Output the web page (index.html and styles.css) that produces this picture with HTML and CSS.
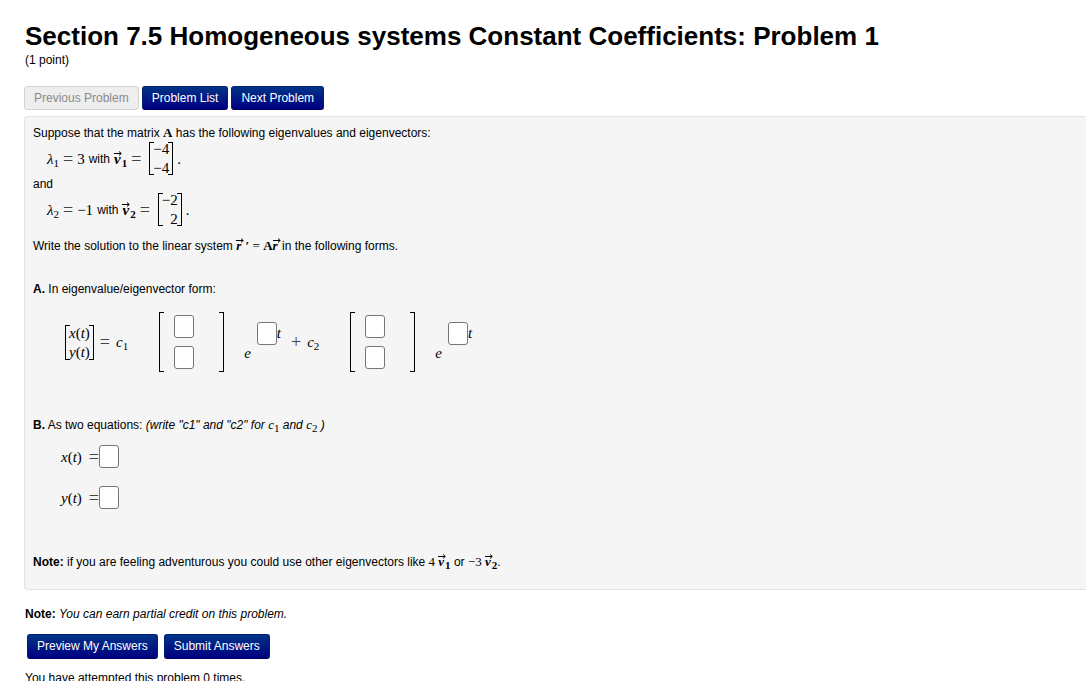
FILE: index.html
```
<!DOCTYPE html>
<html lang="en">
<head>
    <meta charset="UTF-8">
    <meta name="viewport" content="width=device-width, initial-scale=1.0">
    <title>Section 7.5 Homogeneous systems Constant Coefficients: Problem 1</title>
    <link rel="stylesheet" href="styles.css">
</head>
<body>

    <!-- Arrow drawn above vector names -->
    <svg class="defs" width="0" height="0" aria-hidden="true">
        <symbol id="arrow" viewBox="0 0 8 5">
            <path d="M0 2.5H7M5 0.5L7.3 2.5L5 4.5" fill="none" stroke="#000" stroke-width="1"/>
        </symbol>
    </svg>

    <header class="header">
        <h1 class="title">Section 7.5 Homogeneous systems Constant Coefficients: Problem 1</h1>
        <div>(1 point)</div>
    </header>

    <!-- Problem navigation -->
    <nav class="nav">
        <button class="btn btn-disabled" type="button" disabled>Previous Problem</button>
        <button class="btn" type="button">Problem List</button>
        <button class="btn" type="button">Next Problem</button>
    </nav>

    <form>
        <div class="problem">
            <p>Suppose that the matrix <b class="math">A</b> has the following eigenvalues and eigenvectors:</p>

            <div class="eigen">
                <span class="math"><i>λ</i><sub>1</sub></span>
                <span class="math op">=</span>
                <span class="math">3</span>
                <span>with</span>
                <span class="math bold"><span class="vec">v<svg><use href="#arrow"/></svg></span><sub>1</sub></span>
                <span class="math op">=</span>
                <span class="matrix math"><span>−4</span><span>−4</span></span>
                <span class="math">.</span>
            </div>
            <p>and</p>
            <div class="eigen">
                <span class="math"><i>λ</i><sub>2</sub></span>
                <span class="math op">=</span>
                <span class="math">−1</span>
                <span>with</span>
                <span class="math bold"><span class="vec">v<svg><use href="#arrow"/></svg></span><sub>2</sub></span>
                <span class="math op">=</span>
                <span class="matrix math"><span>−2</span><span>2</span></span>
                <span class="math">.</span>
            </div>

            <p class="task">Write the solution to the linear system <span class="math bold"><span class="vec">r<svg><use href="#arrow"/></svg></span> ′</span> <span class="math">=</span> <span class="math bold">A<span class="vec">r<svg><use href="#arrow"/></svg></span></span> in the following forms.</p>

            <!-- Part A -->
            <p class="part-a"><b>A.</b> In eigenvalue/eigenvector form:</p>
            <div class="system">
                <span class="matrix math"><span><i>x</i>(<i>t</i>)</span><span><i>y</i>(<i>t</i>)</span></span>
                <span class="math op">=</span>
                <span class="math"><i>c</i><sub>1</sub></span>
                <div class="answer-vector">
                    <input class="answer" type="text" aria-label="First vector, row 1">
                    <input class="answer" type="text" aria-label="First vector, row 2">
                </div>
                <div class="power math">
                    <i class="base">e</i>
                    <input class="answer" type="text" aria-label="First exponent">
                    <i class="exponent">t</i>
                </div>
                <span class="math op">+</span>
                <span class="math"><i>c</i><sub>2</sub></span>
                <div class="answer-vector">
                    <input class="answer" type="text" aria-label="Second vector, row 1">
                    <input class="answer" type="text" aria-label="Second vector, row 2">
                </div>
                <div class="power math">
                    <i class="base">e</i>
                    <input class="answer" type="text" aria-label="Second exponent">
                    <i class="exponent">t</i>
                </div>
            </div>

            <!-- Part B -->
            <p><b>B.</b> As two equations: <i>(write "c1" and "c2" for <span class="math">c<sub class="upright">1</sub></span> and <span class="math">c<sub class="upright">2</sub></span> )</i></p>
            <div class="equation">
                <label class="math" for="xt"><i>x</i>(<i>t</i>)</label>
                <span class="math op">=</span>
                <input class="answer" id="xt" type="text">
            </div>
            <div class="equation">
                <label class="math" for="yt"><i>y</i>(<i>t</i>)</label>
                <span class="math op">=</span>
                <input class="answer" id="yt" type="text">
            </div>

            <p class="hint"><b>Note:</b> if you are feeling adventurous you could use other eigenvectors like <span class="math">4 <span class="bold"><span class="vec">v<svg><use href="#arrow"/></svg></span><sub>1</sub></span></span> or <span class="math">−3 <span class="bold"><span class="vec">v<svg><use href="#arrow"/></svg></span><sub>2</sub></span></span>.</p>
        </div>

        <p class="credit"><b>Note:</b> <i>You can earn partial credit on this problem.</i></p>

        <div class="submit">
            <button class="btn" type="button">Preview My Answers</button>
            <button class="btn" type="submit">Submit Answers</button>
        </div>
    </form>

    <p class="attempts">You have attempted this problem 0 times.</p>

</body>
</html>
```
FILE: styles.css
```
/* General page styling */
body {
    font-family: "Liberation Sans", Arial, sans-serif;
    font-size: 12px;
    line-height: 18px;
    color: #000;
    background: #fff;
    margin: 0;
    padding: 22px 0 0 24px;
}

p {
    margin: 0;
}

.defs {
    display: block;
}

.header,
.credit,
.attempts {
    padding-left: 1px;
}

.title {
    font-size: 26px;
    line-height: 29px;
    margin: 0;
}

/* Buttons */
.nav {
    display: flex;
    gap: 3px;
    margin: 17px 0 6px;
}

.btn {
    font: inherit;
    line-height: 18px;
    padding: 2px 9px;
    color: #fff;
    background: linear-gradient(#003388, #000080);
    border: 1px solid #002070;
    border-bottom-color: #000060;
    border-radius: 3px;
}

.btn-disabled {
    color: #8a8a8a;
    background: #eee;
    border-color: #d4d4d4;
}

/* Problem panel */
.problem {
    padding: 7px 8px 18px;
    background: #f5f5f5;
    border: 1px solid #e3e3e3;
    border-right: 0;
    border-radius: 4px 0 0 4px;
}

/* Math text */
.math {
    font-family: "Liberation Serif", "Times New Roman", serif;
    font-size: 15px;
    line-height: 16px;
}

p .math {
    font-size: 13px;
}

.math sub {
    font-size: 11px;
    line-height: 0;
    vertical-align: -3px;
}

.op {
    font-size: 18px;
    color: #444;
}

.bold {
    font-weight: bold;
}

.upright {
    font-style: normal;
}

.vec {
    position: relative;
    font-style: italic;
    padding-right: 1px;
}

/* The arrow lies over the letter */
.vec svg {
    position: absolute;
    left: 0;
    top: 0;
    width: 8px;
    height: 5px;
}

/* Matrix with square brackets */
.matrix,
.answer-vector {
    display: flex;
    flex-direction: column;
    background:
        linear-gradient(#000, #000) left top / 4px 1px,
        linear-gradient(#000, #000) left bottom / 4px 1px,
        linear-gradient(#000, #000) right top / 4px 1px,
        linear-gradient(#000, #000) right bottom / 4px 1px;
    background-repeat: no-repeat;
    border: solid #000;
    border-width: 0 1px;
}

.matrix {
    align-items: flex-end;
    padding: 0 3px;
}

.eigen {
    display: flex;
    align-items: center;
    gap: 4px;
    margin-left: 14px;
}

.eigen .matrix {
    line-height: 14px;
    gap: 5px;
    margin-left: 4px;
}

.task {
    margin-top: 11px;
}

.part-a {
    margin-top: 25px;
}

/* Answer blanks */
.answer {
    box-sizing: border-box;
    width: 20px;
    height: 23px;
    padding: 1px;
    font: inherit;
    background: #fff;
    border: 1px solid #767676;
    border-radius: 3px;
}

.system {
    display: flex;
    align-items: center;
    gap: 6px;
    margin: 14px 0 44px 32px;
}

.system .matrix {
    gap: 3px;
}

.answer-vector {
    gap: 8px;
    padding: 3px 29px 3px 14px;
    margin: 0 14px 0 25px;
}

.power {
    display: flex;
    align-items: flex-start;
    align-self: flex-start;
    margin-right: 4px;
    padding-top: 10px;
}

.power .base {
    margin-right: 6px;
    padding-top: 23px;
}

.power .exponent {
    line-height: 23px;
}

.equation {
    display: flex;
    align-items: center;
    margin: 11px 0 18px 28px;
}

.equation .op {
    margin-left: 7px;
}

.hint {
    margin-top: 44px;
}

/* Below the panel */
.credit {
    margin-top: 15px;
}

.submit {
    display: flex;
    gap: 6px;
    margin: 11px 0 10px 3px;
}

.submit .btn {
    padding: 2px 9px 3px;
}
```
